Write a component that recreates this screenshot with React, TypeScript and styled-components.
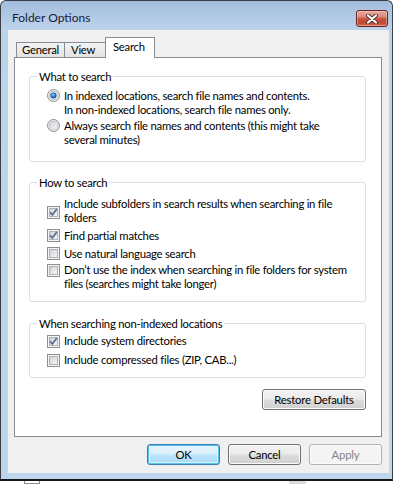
import React, { useId } from "react";
import styled, { createGlobalStyle, css } from "styled-components";

const FONT = `Lato, "Liberation Sans", Arial, sans-serif`;

const GlobalStyle = createGlobalStyle`
  html, body { margin: 0; padding: 0; background: #ffffff; }
  body { font-family: ${FONT}; font-size: 11.3px; letter-spacing: -0.25px; color: #000000; }
  *, *::before, *::after { box-sizing: border-box; }
`;

const Screen = styled.div`
  width: 394px;
  height: 484px;
  overflow: hidden;
  display: flex;
  flex-direction: column;
  background: #ffffff;
`;

const Window = styled.div`
  flex: none;
  width: 393px;
  height: 481px;
  display: flex;
  flex-direction: column;
  padding: 0 3px 6px 7px;
  border: 1px solid #3b3d42;
  border-bottom: 2px solid #15171a;
  border-radius: 6px 6px 0 0;
  background: linear-gradient(180deg, #a2bddc 0px, #b0c9e5 15px, #bcd3eb 29px, #bed5ec 100%);
`;

const TitleBar = styled.div`
  flex: none;
  height: 29px;
  display: flex;
  align-items: flex-start;
  justify-content: space-between;
  padding: 9px 1px 0 4px;
`;

const Title = styled.div`
  font-size: 12px;
  letter-spacing: 0;
  line-height: 16px;
  color: #1b1b3a;
`;

const CloseButton = styled.div`
  width: 32px;
  height: 17px;
  display: flex;
  align-items: center;
  justify-content: center;
  border: 1px solid #6b231c;
  border-radius: 3px;
  background: linear-gradient(180deg, #e6aca0 0%, #d9897a 40%, #c85a47 50%, #bf4532 75%, #cf6a52 100%);
  box-shadow: inset 0 0 0 1px rgba(255, 220, 210, 0.45);
`;

const Client = styled.div`
  flex: 1;
  display: flex;
  flex-direction: column;
  background: #f0f0f0;
  padding: 7px 7px 8px 6px;
`;

const TabStrip = styled.div`
  flex: none;
  height: 20px;
  display: flex;
  align-items: flex-end;
  padding-left: 2px;
`;

const Tab = styled.div<{ $active?: boolean; $w: number; $pl: number; $ml: number }>`
  flex: none;
  width: ${(p) => p.$w}px;
  margin-left: ${(p) => p.$ml}px;
  padding-left: ${(p) => p.$pl}px;
  border: 1px solid #898c95;
  border-bottom: none;
  white-space: nowrap;
  color: #000;
  ${(p) =>
    p.$active
      ? css`
          position: relative;
          z-index: 1;
          height: 21px;
          margin-bottom: -1px;
          padding-top: 2px;
          line-height: 14px;
          background: #ffffff;
        `
      : css`
          height: 15px;
          line-height: 14px;
          background: linear-gradient(180deg, #f3f3f3 0%, #ebebeb 50%, #e3e3e3 100%);
        `}
`;

const Panel = styled.div`
  flex: none;
  height: 380px;
  display: flex;
  flex-direction: column;
  border: 1px solid #898c95;
  background: #ffffff;
  padding: 12px 15px 0 14px;
`;

const Group = styled.fieldset<{ $mt: number }>`
  margin: ${(p) => p.$mt}px 0 0 0;
  padding: 0;
  min-width: 0;
  border: 1px solid #d5dfe5;
  border-radius: 3px;
`;

const Legend = styled.legend`
  margin-left: 7px;
  padding: 0 2px;
  line-height: 13px;
  white-space: nowrap;
`;

const GroupBody = styled.div<{ $pt: number; $pb: number }>`
  display: flex;
  flex-direction: column;
  padding: ${(p) => p.$pt}px 0 ${(p) => p.$pb}px 17px;
`;

const Option = styled.div<{ $mt: number }>`
  display: flex;
  align-items: flex-start;
  margin-top: ${(p) => p.$mt}px;
`;

const Label = styled.span`
  line-height: 13.5px;
  white-space: nowrap;
`;

const BoxFrame = styled.span<{ $offset: number }>`
  flex: none;
  width: 13px;
  height: 13px;
  margin-top: ${(p) => p.$offset}px;
  margin-right: 4px;
  display: grid;
  place-items: center;
  border: 1px solid #8e8f8f;
  background: #f5f5f5;
  & > * {
    grid-area: 1 / 1;
  }
`;

const BoxFill = styled.span`
  width: 9px;
  height: 9px;
  border: 1px solid #aeb3b9;
  background: linear-gradient(135deg, #cdd1d7 0%, #e4e6e9 55%, #f7f7f7 100%);
`;

const RadioSlot = styled.span<{ $offset: number }>`
  flex: none;
  width: 13px;
  height: 13px;
  margin-top: ${(p) => p.$offset}px;
  margin-right: 4px;
  display: flex;
`;

const ButtonBase = styled.button<{ $w: number; $kind?: "default" | "normal" | "disabled" }>`
  flex: none;
  width: ${(p) => p.$w}px;
  height: 21px;
  padding: 0;
  font-family: ${FONT};
  font-size: 11.3px;
  letter-spacing: -0.2px;
  line-height: 19px;
  border-radius: 3px;
  border: 1px solid #707070;
  color: #000;
  background: linear-gradient(180deg, #f2f2f2 0%, #ebebeb 48%, #dddddd 52%, #cfcfcf 100%);
  box-shadow: inset 0 0 0 1px #fbfbfb;
  ${(p) =>
    p.$kind === "default" &&
    css`
      border-color: #3c7fb1;
      background: linear-gradient(180deg, #eaf6fd 0%, #d9f0fc 48%, #bee6fd 52%, #a7d9f5 100%);
      box-shadow: inset 0 0 0 1px #56c2ee, inset 0 0 0 2px #dff3fc;
    `}
  ${(p) =>
    p.$kind === "disabled" &&
    css`
      border-color: #adb2b5;
      color: #838383;
      background: #f4f4f4;
      box-shadow: inset 0 0 0 1px #fcfcfc;
    `}
`;

const RestoreButton = styled(ButtonBase)`
  align-self: flex-end;
  margin-top: 11px;
`;

const ButtonRow = styled.div`
  flex: none;
  display: flex;
  justify-content: flex-end;
  gap: 8px;
  margin-top: 7px;
`;

const Below = styled.div`
  flex: none;
  height: 3px;
  display: flex;
  align-items: stretch;
`;

const Fragment1 = styled.div`
  margin-left: 24px;
  width: 16px;
  border: 1px solid #8a8a8a;
  border-top: none;
`;

const Fragment2 = styled.div`
  margin-left: 249px;
  width: 17px;
  background: #dcdcdc;
`;

function CloseGlyph() {
  return (
    <svg width="12" height="10" viewBox="0 0 12 10">
      <path d="M2 1.5 L10 8.5 M10 1.5 L2 8.5" stroke="#5a2a26" strokeWidth="4" strokeLinecap="round" />
      <path d="M2 1.5 L10 8.5 M10 1.5 L2 8.5" stroke="#ffffff" strokeWidth="2.2" strokeLinecap="round" />
    </svg>
  );
}

function Checkbox({ checked, offset }: { checked?: boolean; offset: number }) {
  return (
    <BoxFrame $offset={offset}>
      <BoxFill />
      {checked && (
        <svg width="11" height="11" viewBox="0 0 11 11">
          <path d="M2.2 5.4 L4.4 8 L8.8 2" fill="none" stroke="#56699a" strokeWidth="1.7" />
        </svg>
      )}
    </BoxFrame>
  );
}

function Radio({ checked, offset }: { checked?: boolean; offset: number }) {
  const id = useId().replace(/:/g, "");
  return (
    <RadioSlot $offset={offset}>
      <svg width="13" height="13" viewBox="0 0 13 13">
        <defs>
          <linearGradient id={`f${id}`} x1="0" y1="0" x2="1" y2="1">
            <stop offset="0" stopColor="#c9ccd2" />
            <stop offset="1" stopColor="#fbfbfb" />
          </linearGradient>
          <radialGradient id={`d${id}`} cx="0.45" cy="0.4" r="0.65">
            <stop offset="0" stopColor="#a8dcfb" />
            <stop offset="0.45" stopColor="#2b7fd4" />
            <stop offset="1" stopColor="#123e7c" />
          </radialGradient>
        </defs>
        <circle cx="6.5" cy="6.5" r="6" fill="#f6f6f6" stroke="#8b8d90" strokeWidth="1" />
        <circle cx="6.5" cy="6.5" r="4.4" fill={`url(#f${id})`} stroke="#b5b9bf" strokeWidth="0.8" />
        {checked && <circle cx="6.5" cy="6.5" r="3" fill={`url(#d${id})`} />}
      </svg>
    </RadioSlot>
  );
}

type Item = { lines: string[]; checked?: boolean; mt: number; offset: number };

function Lines({ lines }: { lines: string[] }) {
  return (
    <Label>
      {lines.map((l, i) => (
        <React.Fragment key={i}>
          {i > 0 && <br />}
          {l}
        </React.Fragment>
      ))}
    </Label>
  );
}

const whatToSearch: Item[] = [
  {
    lines: ["In indexed locations, search file names and contents.", "In non-indexed locations, search file names only."],
    checked: true,
    mt: 0,
    offset: 0,
  },
  {
    lines: ["Always search file names and contents (this might take", "several minutes)"],
    mt: 3,
    offset: 0,
  },
];

const howToSearch: Item[] = [
  {
    lines: ["Include subfolders in search results when searching in file", "folders"],
    checked: true,
    mt: 0,
    offset: 9,
  },
  { lines: ["Find partial matches"], checked: true, mt: 5, offset: 0 },
  { lines: ["Use natural language search"], mt: 4, offset: 0 },
  {
    lines: ["Don\u2019t use the index when searching in file folders for system", "files (searches might take longer)"],
    mt: 3,
    offset: 1,
  },
];

const nonIndexed: Item[] = [
  { lines: ["Include system directories"], checked: true, mt: 0, offset: 1 },
  { lines: ["Include compressed files (ZIP, CAB...)"], mt: 5, offset: 1 },
];

export default function App() {
  return (
    <>
      <GlobalStyle />
      <Screen>
        <Window>
          <TitleBar>
            <Title>Folder Options</Title>
            <CloseButton>
              <CloseGlyph />
            </CloseButton>
          </TitleBar>
          <Client>
            <TabStrip>
              <Tab $w={49} $pl={5} $ml={0}>
                General
              </Tab>
              <Tab $w={43} $pl={6} $ml={-1}>
                View
              </Tab>
              <Tab $active $w={50} $pl={7} $ml={-2}>
                Search
              </Tab>
            </TabStrip>
            <Panel>
              <Group $mt={0}>
                <Legend>What to search</Legend>
                <GroupBody $pt={6} $pb={15}>
                  {whatToSearch.map((it, i) => (
                    <Option key={i} $mt={it.mt}>
                      <Radio checked={it.checked} offset={it.offset} />
                      <Lines lines={it.lines} />
                    </Option>
                  ))}
                </GroupBody>
              </Group>
              <Group $mt={14}>
                <Legend>How to search</Legend>
                <GroupBody $pt={8} $pb={11}>
                  {howToSearch.map((it, i) => (
                    <Option key={i} $mt={it.mt}>
                      <Checkbox checked={it.checked} offset={it.offset} />
                      <Lines lines={it.lines} />
                    </Option>
                  ))}
                </GroupBody>
              </Group>
              <Group $mt={15}>
                <Legend>When searching non-indexed locations</Legend>
                <GroupBody $pt={4} $pb={10}>
                  {nonIndexed.map((it, i) => (
                    <Option key={i} $mt={it.mt}>
                      <Checkbox checked={it.checked} offset={it.offset} />
                      <Lines lines={it.lines} />
                    </Option>
                  ))}
                </GroupBody>
              </Group>
              <RestoreButton $w={104}>Restore Defaults</RestoreButton>
            </Panel>
            <ButtonRow>
              <ButtonBase $w={73} $kind="default">OK</ButtonBase>
              <ButtonBase $w={73}>Cancel</ButtonBase>
              <ButtonBase $w={73} $kind="disabled">Apply</ButtonBase>
            </ButtonRow>
          </Client>
        </Window>
        <Below>
          <Fragment1 />
          <Fragment2 />
        </Below>
      </Screen>
    </>
  );
}
